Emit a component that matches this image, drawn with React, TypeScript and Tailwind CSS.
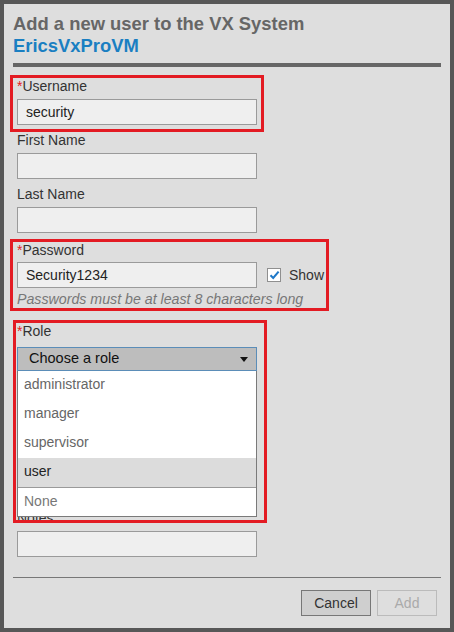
import { useState } from 'react';

const FONT = { fontFamily: '"Liberation Sans", Arial, sans-serif' };

const ROLES = ['administrator', 'manager', 'supervisor', 'user'];

function Label({ text, required, className = 'mb-[5px]' }: { text: string; required?: boolean; className?: string }) {
  return (
    <div className={`text-[14px] leading-[16px] text-[#333] ${className}`}>
      {required && <span className="text-[#e31b23]">*</span>}
      {text}
    </div>
  );
}

function TextInput({ value = '' }: { value?: string }) {
  return (
    <div className="flex h-[26px] w-[240px] items-center border border-[#9a9a9a] bg-[#efefef] pl-[8px] text-[14px] text-[#222]">
      {value}
    </div>
  );
}

export default function App() {
  const [show, setShow] = useState(true);

  return (
    <div
      style={FONT}
      className="flex h-[632px] w-[454px] flex-col border-4 border-[#575757] bg-[#dedede] pl-[9px] pr-[9px] pt-[9px]"
    >
      {/* En-tête */}
      <div className="text-[18.4px] font-bold leading-[22px]">
        <div className="text-[#666]">Add a new user to the VX System</div>
        <div className="text-[#1a7fc2]">EricsVxProVM</div>
      </div>
      <div className="mt-[6px] h-[4px] bg-[#666]" />

      {/* Username */}
      <div className="-ml-[3px] mt-[8px] w-[254px] border-[3px] border-[#e31b23] pb-[4px] pl-[4px]">
        <Label text="Username" required />
        <TextInput value="security" />
      </div>

      <div className="pl-[4px]">
        <Label text="First Name" />
        <TextInput />
      </div>

      <div className="mt-[7px] pl-[4px]">
        <Label text="Last Name" />
        <TextInput />
      </div>

      {/* Password */}
      <div className="-ml-[3px] mt-[6px] w-[319px] border-[3px] border-[#e31b23] pb-[1px] pl-[4px]">
        <Label text="Password" required className="mb-[4px]" />
        <div className="flex items-center">
          <TextInput value="Security1234" />
          <button
            type="button"
            onClick={() => setShow(!show)}
            className="ml-[10px] flex h-[14px] w-[14px] items-center justify-center border border-[#8f8f8f] bg-white"
          >
            {show && (
              <svg width="11" height="10" viewBox="0 0 11 10">
                <path d="M1.5 5.2 L4.2 8 L9.6 1.6" fill="none" stroke="#1f78c8" strokeWidth="2" />
              </svg>
            )}
          </button>
          <span className="ml-[8px] text-[14px] text-[#333]">Show</span>
        </div>
        <div className="mt-[3px] text-[14.2px] italic leading-[16px] text-[#777]">
          Passwords must be at least 8 characters long
        </div>
      </div>

      {/* Role + liste déroulante ouverte */}
      <div className="relative mt-[12px] h-[187px] pl-[4px]">
        <Label text="Role" required className="mb-[8px]" />
        <div className="flex h-[24px] w-[240px] items-center justify-between border border-[#5b8db8] bg-[#bdbdbd] pl-[11px] pr-[8px] text-[14.5px] text-[#111]">
          <span>Choose a role</span>
          <svg width="8" height="5" viewBox="0 0 8 5">
            <path d="M0 0 H8 L4 5 Z" fill="#111" />
          </svg>
        </div>

        <div className="absolute left-[4px] top-[48px] z-10 w-[240px] border-x border-b border-[#7a7a7a] bg-white">
          {ROLES.map((r) => (
            <div
              key={r}
              className={`flex h-[29px] items-center pb-[3px] pl-[6px] text-[14px] ${
                r === 'user' ? 'bg-[#dcdcdc] text-[#222]' : 'text-[#666]'
              }`}
            >
              {r}
            </div>
          ))}
          <div className="flex h-[29px] items-center border-t border-[#9a9a9a] pb-[1px] pl-[6px] text-[14px] text-[#777]">
            None
          </div>
        </div>

        <div className="pointer-events-none absolute -top-[3px] left-0 z-20 h-[203px] w-[254px] border-[3px] border-[#e31b23]" />
      </div>

      <div className="pl-[4px]">
        <Label text="Notes" />
        <TextInput />
      </div>

      <div className="mt-[20px] h-px bg-[#777]" />

      <div className="mt-[12px] flex justify-end gap-[6px] pr-[4px]">
        <button
          type="button"
          className="h-[26px] w-[70px] border border-[#777] bg-[#cfcfcf] text-[14px] text-[#333]"
        >
          Cancel
        </button>
        <button
          type="button"
          disabled
          className="h-[26px] w-[60px] border border-[#bbb] text-[14px] text-[#aaa]"
        >
          Add
        </button>
      </div>
    </div>
  );
}
